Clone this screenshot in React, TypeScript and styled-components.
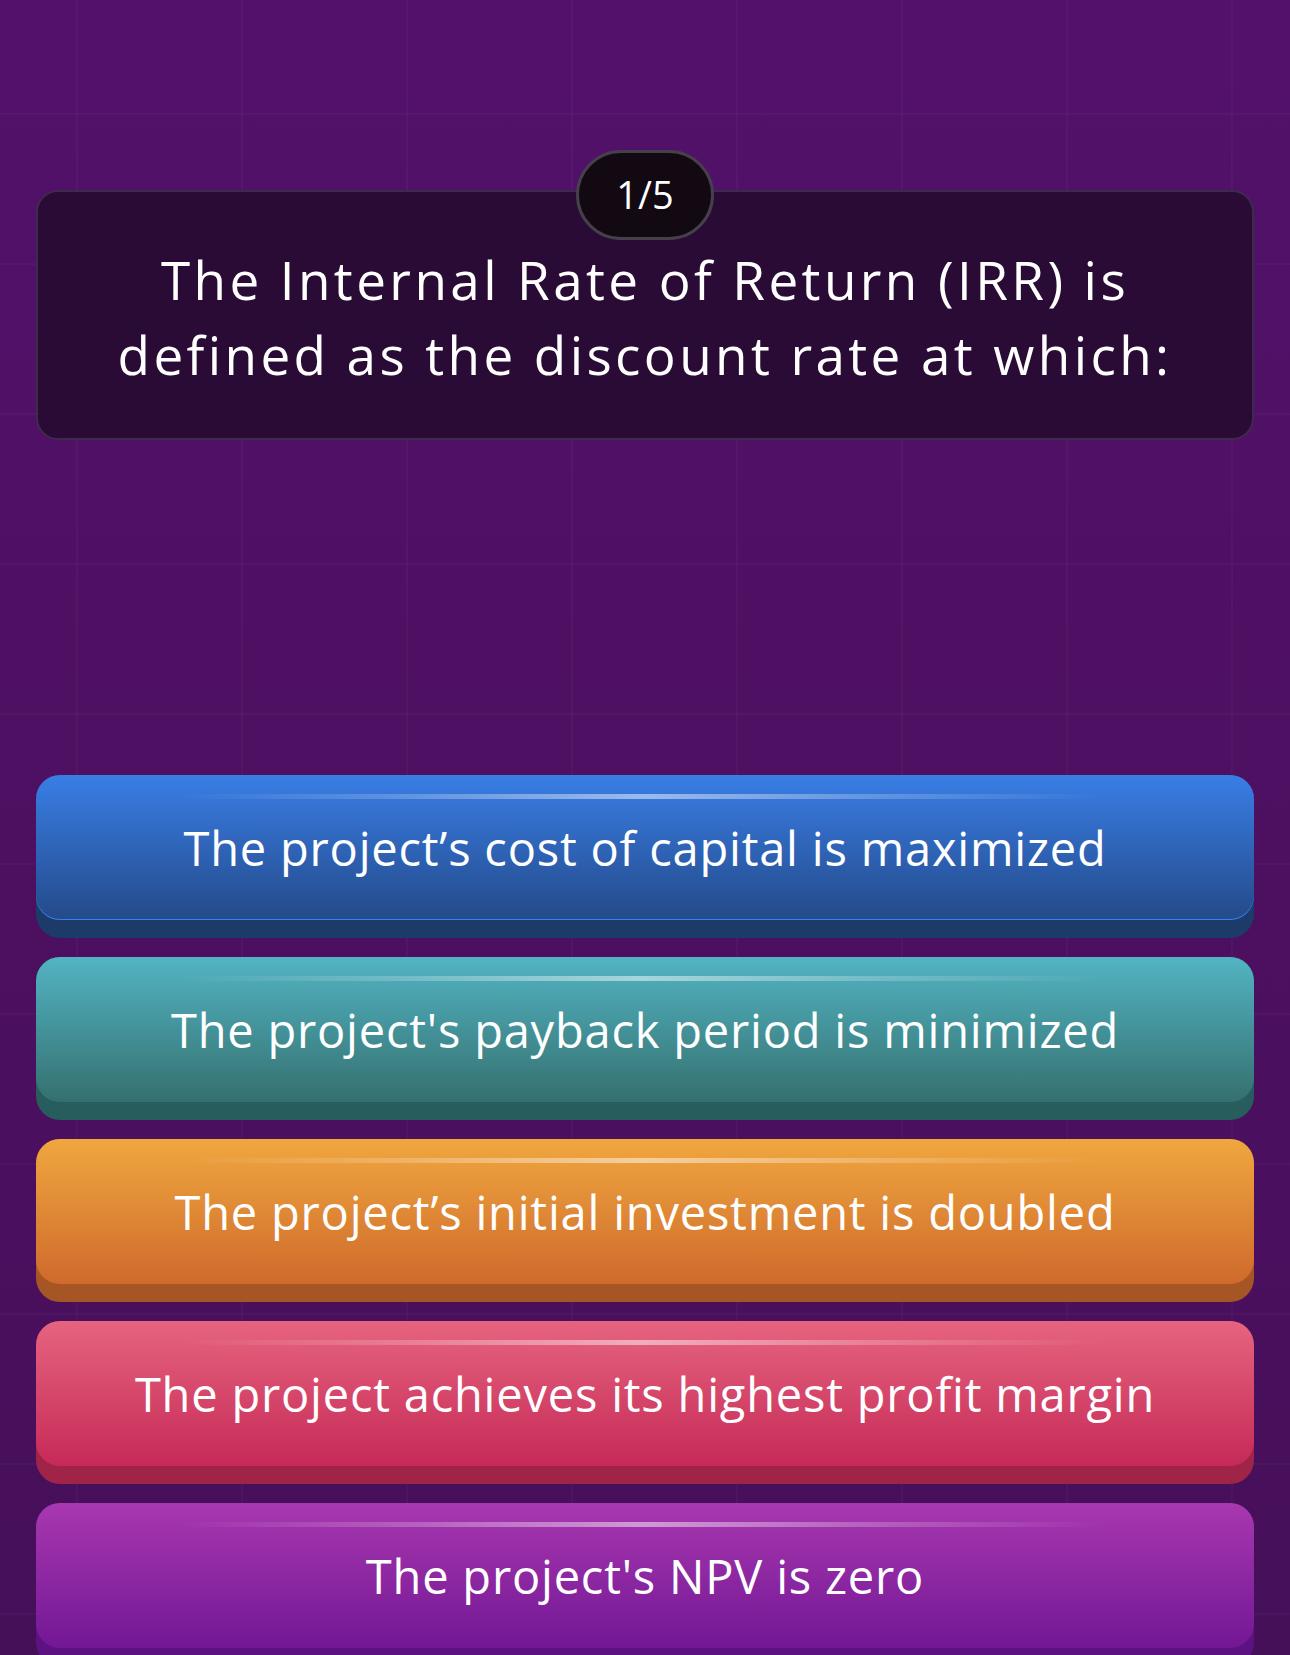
import React from 'react'
import styled, { createGlobalStyle } from 'styled-components'

// ── page ───────────────────────────────────────────────────
const GlobalStyle = createGlobalStyle`
  html, body {
    margin: 0;
    padding: 0;
  }
  body {
    min-height: 1655px;
    font-family: "Open Sans", Lato, "Noto Sans", "Liberation Sans", sans-serif;
    background-color: #4e1063;
    background-image:
      linear-gradient(90deg, rgba(255,255,255,0.022) 2px, transparent 2px),
      linear-gradient(0deg, rgba(255,255,255,0.022) 2px, transparent 2px),
      linear-gradient(180deg, #53116b 0%, #4e1062 45%, #4a0f5e 75%, #461059 100%);
    background-size: 165px 150px, 165px 150px, 100% 1655px;
    background-position: 76px 115px, 76px 115px, 0 0;
    background-repeat: repeat, repeat, no-repeat;
  }
`

const Screen = styled.main`
  box-sizing: border-box;
  width: 1290px;
  height: 1655px;
  overflow: hidden;
  padding: 190px 36px 0;
  display: flex;
  flex-direction: column;

  & > * { flex-shrink: 0; }
`

// ── question ───────────────────────────────────────────────
const QuestionCard = styled.section`
  position: relative;
  box-sizing: border-box;
  height: 250px;
  padding: 4px 20px 0;
  border: 2px solid #3e2b4b;
  border-radius: 22px;
  background: #2a0b35;
  display: flex;
  align-items: center;
  justify-content: center;
`

const Counter = styled.div`
  position: absolute;
  top: -42px;
  left: 50%;
  transform: translateX(-50%);
  box-sizing: border-box;
  width: 138px;
  height: 90px;
  border: 3px solid #46404a;
  border-radius: 45px;
  background: #120912;
  color: #fff;
  font-size: 38px;
  display: flex;
  align-items: center;
  justify-content: center;
  padding-bottom: 2px;
`

const QuestionText = styled.h1`
  margin: 0;
  color: #fff;
  font-weight: 400;
  font-size: 53px;
  line-height: 75px;
  letter-spacing: 3.4px;
  text-align: center;
`

// ── answers ────────────────────────────────────────────────
const AnswerList = styled.div`
  margin-top: 335px;
  display: flex;
  flex-direction: column;
  gap: 19px;
`

const AnswerButton = styled.button<{ $depth: string }>`
  display: block;
  width: 100%;
  flex-shrink: 0;
  padding: 0 0 18px;
  border: none;
  border-radius: 24px;
  background: ${({ $depth }) => $depth};
  cursor: pointer;
  font: inherit;
`

const AnswerFace = styled.span<{ $top: string; $bottom: string; $edge?: string }>`
  position: relative;
  box-sizing: border-box;
  height: 145px;
  border-radius: 24px;
  background: linear-gradient(180deg, ${({ $top }) => $top} 0%, ${({ $bottom }) => $bottom} 100%);
  display: flex;
  align-items: center;
  justify-content: center;
  color: #fff;
  font-size: 47px;
  letter-spacing: 0.8px;
  box-shadow: ${({ $edge }) => ($edge ? `inset 0 -1px 0 ${$edge}` : 'none')};

  &::before {
    content: "";
    position: absolute;
    top: 19px;
    left: 145px;
    right: 152px;
    height: 5px;
    border-radius: 3px;
    background: linear-gradient(90deg,
      rgba(255,255,255,0) 0%,
      rgba(255,255,255,0.22) 25%,
      rgba(255,255,255,0.5) 50%,
      rgba(255,255,255,0.22) 75%,
      rgba(255,255,255,0) 100%);
  }
`

const answers = [
  { text: 'The project’s cost of capital is maximized', top: '#397ee6', bottom: '#244a89', depth: '#1c3b69', edge: '#3a80f0' },
  { text: 'The project\'s payback period is minimized', top: '#52b4c3', bottom: '#35706f', depth: '#285d5e' },
  { text: 'The project’s initial investment is doubled', top: '#f0a73f', bottom: '#cf6a2c', depth: '#a55624' },
  { text: 'The project achieves its highest profit margin', top: '#e6647f', bottom: '#c62a57', depth: '#a02348' },
  { text: 'The project\'s NPV is zero', top: '#a838b0', bottom: '#731795', depth: '#5c1280' },
]

export default function App() {
  return (
    <>
      <GlobalStyle />
      <Screen>
        <QuestionCard>
          <Counter>1/5</Counter>
          <QuestionText>
            The Internal Rate of Return (IRR) is
            <br />
            defined as the discount rate at which:
          </QuestionText>
        </QuestionCard>

        <AnswerList>
          {answers.map(a => (
            <AnswerButton key={a.text} $depth={a.depth}>
              <AnswerFace $top={a.top} $bottom={a.bottom} $edge={a.edge}>
                {a.text}
              </AnswerFace>
            </AnswerButton>
          ))}
        </AnswerList>
      </Screen>
    </>
  )
}
